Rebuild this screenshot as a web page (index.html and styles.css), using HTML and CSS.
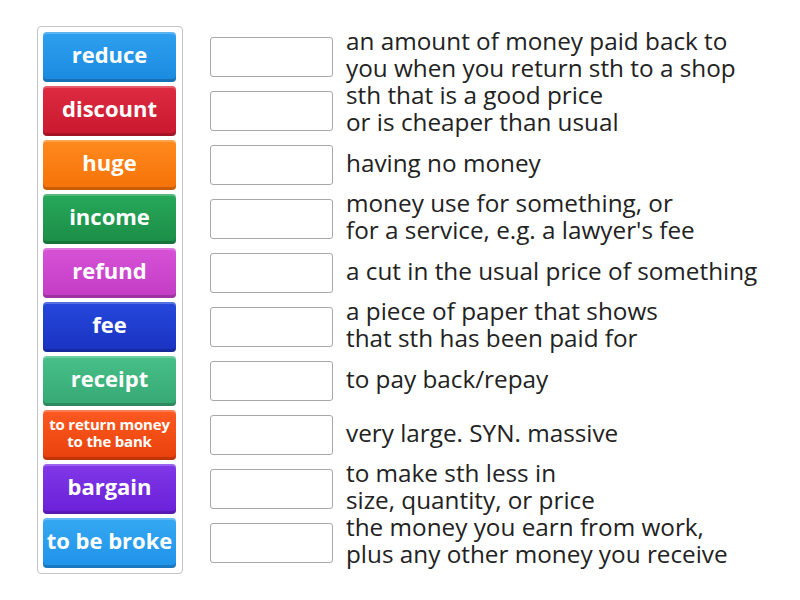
FILE: index.html
```html
<!DOCTYPE html>
<html>
<head>
<meta charset="utf-8">
<link rel="stylesheet" href="styles.css">
</head>
<body>
<div class="page">
  <div class="bank">
    <div class="tile c1">reduce</div>
    <div class="tile c2">discount</div>
    <div class="tile c3">huge</div>
    <div class="tile c4">income</div>
    <div class="tile c5">refund</div>
    <div class="tile c6">fee</div>
    <div class="tile c7">receipt</div>
    <div class="tile c8 small">to return money<br>to the bank</div>
    <div class="tile c9">bargain</div>
    <div class="tile c10">to be broke</div>
  </div>
  <div class="rows">
    <div class="row"><div class="slot"></div><div class="def">an amount of money paid back to<br>you when you return sth to a shop</div></div>
    <div class="row"><div class="slot"></div><div class="def">sth that is a good price<br>or is cheaper than usual</div></div>
    <div class="row"><div class="slot"></div><div class="def">having no money</div></div>
    <div class="row"><div class="slot"></div><div class="def">money use for something, or<br>for a service, e.g. a lawyer's fee</div></div>
    <div class="row"><div class="slot"></div><div class="def">a cut in the usual price of something</div></div>
    <div class="row"><div class="slot"></div><div class="def">a piece of paper that shows<br>that sth has been paid for</div></div>
    <div class="row"><div class="slot"></div><div class="def">to pay back/repay</div></div>
    <div class="row"><div class="slot"></div><div class="def">very large. SYN. massive</div></div>
    <div class="row"><div class="slot"></div><div class="def">to make sth less in<br>size, quantity, or price</div></div>
    <div class="row"><div class="slot"></div><div class="def">the money you earn from work,<br>plus any other money you receive</div></div>
  </div>
</div>
</body>
</html>
```
FILE: styles.css
```css
html, body { margin: 0; padding: 0; background: #fff; }
body { font-family: "Open Sans", "Liberation Sans", sans-serif; }
.page {
  display: flex;
  align-items: flex-start;
  padding: 26px 0 0 37px;
}
.bank {
  width: 146px;
  box-sizing: border-box;
  border: 1px solid #c4c4c4;
  border-radius: 4px;
  padding: 5px 6px 5px 5px;
  display: flex;
  flex-direction: column;
  gap: 4px;
}
.tile {
  height: 50px;
  box-sizing: border-box;
  border-radius: 4px;
  color: #fff;
  font-weight: 700;
  font-size: 22px;
  display: flex;
  align-items: center;
  justify-content: center;
  text-align: center;
  line-height: 1.1;
  padding-bottom: 5px;
  box-shadow: inset 0 -3px 0 rgba(0,0,0,0.18), inset 0 2px 0 rgba(255,255,255,0.22);
  white-space: nowrap;
}
.tile.small { font-size: 15px; line-height: 17px; letter-spacing: -0.2px; }
.c1 { background: linear-gradient(#2ea0ee, #1a8ae0); }
.c2 { background: linear-gradient(#de2b42, #c8182e); }
.c3 { background: linear-gradient(#ff8a1e, #f57208); }
.c4 { background: linear-gradient(#27a85a, #1b8d46); }
.c5 { background: linear-gradient(#d652d6, #c23cc4); }
.c6 { background: linear-gradient(#2548dc, #1a32c0); }
.c7 { background: linear-gradient(#48c088, #36a874); }
.c8 { background: linear-gradient(#ff5a22, #e8400a); }
.c9 { background: linear-gradient(#8038e8, #6a20d8); }
.c10 { background: linear-gradient(#36a8f2, #1e92e8); }
.rows {
  margin-left: 27px;
  padding-top: 6px;
  display: flex;
  flex-direction: column;
  gap: 4px;
}
.row {
  height: 50px;
  display: flex;
  align-items: center;
}
.slot {
  width: 123px;
  height: 40px;
  box-sizing: border-box;
  border: 1px solid #a8a8a8;
  border-radius: 3px;
  background: #fff;
  flex: none;
}
.def {
  margin-left: 13px;
  font-size: 24.3px;
  line-height: 27px;
  color: #222;
  white-space: nowrap;
  margin-top: -6px;
}
```
